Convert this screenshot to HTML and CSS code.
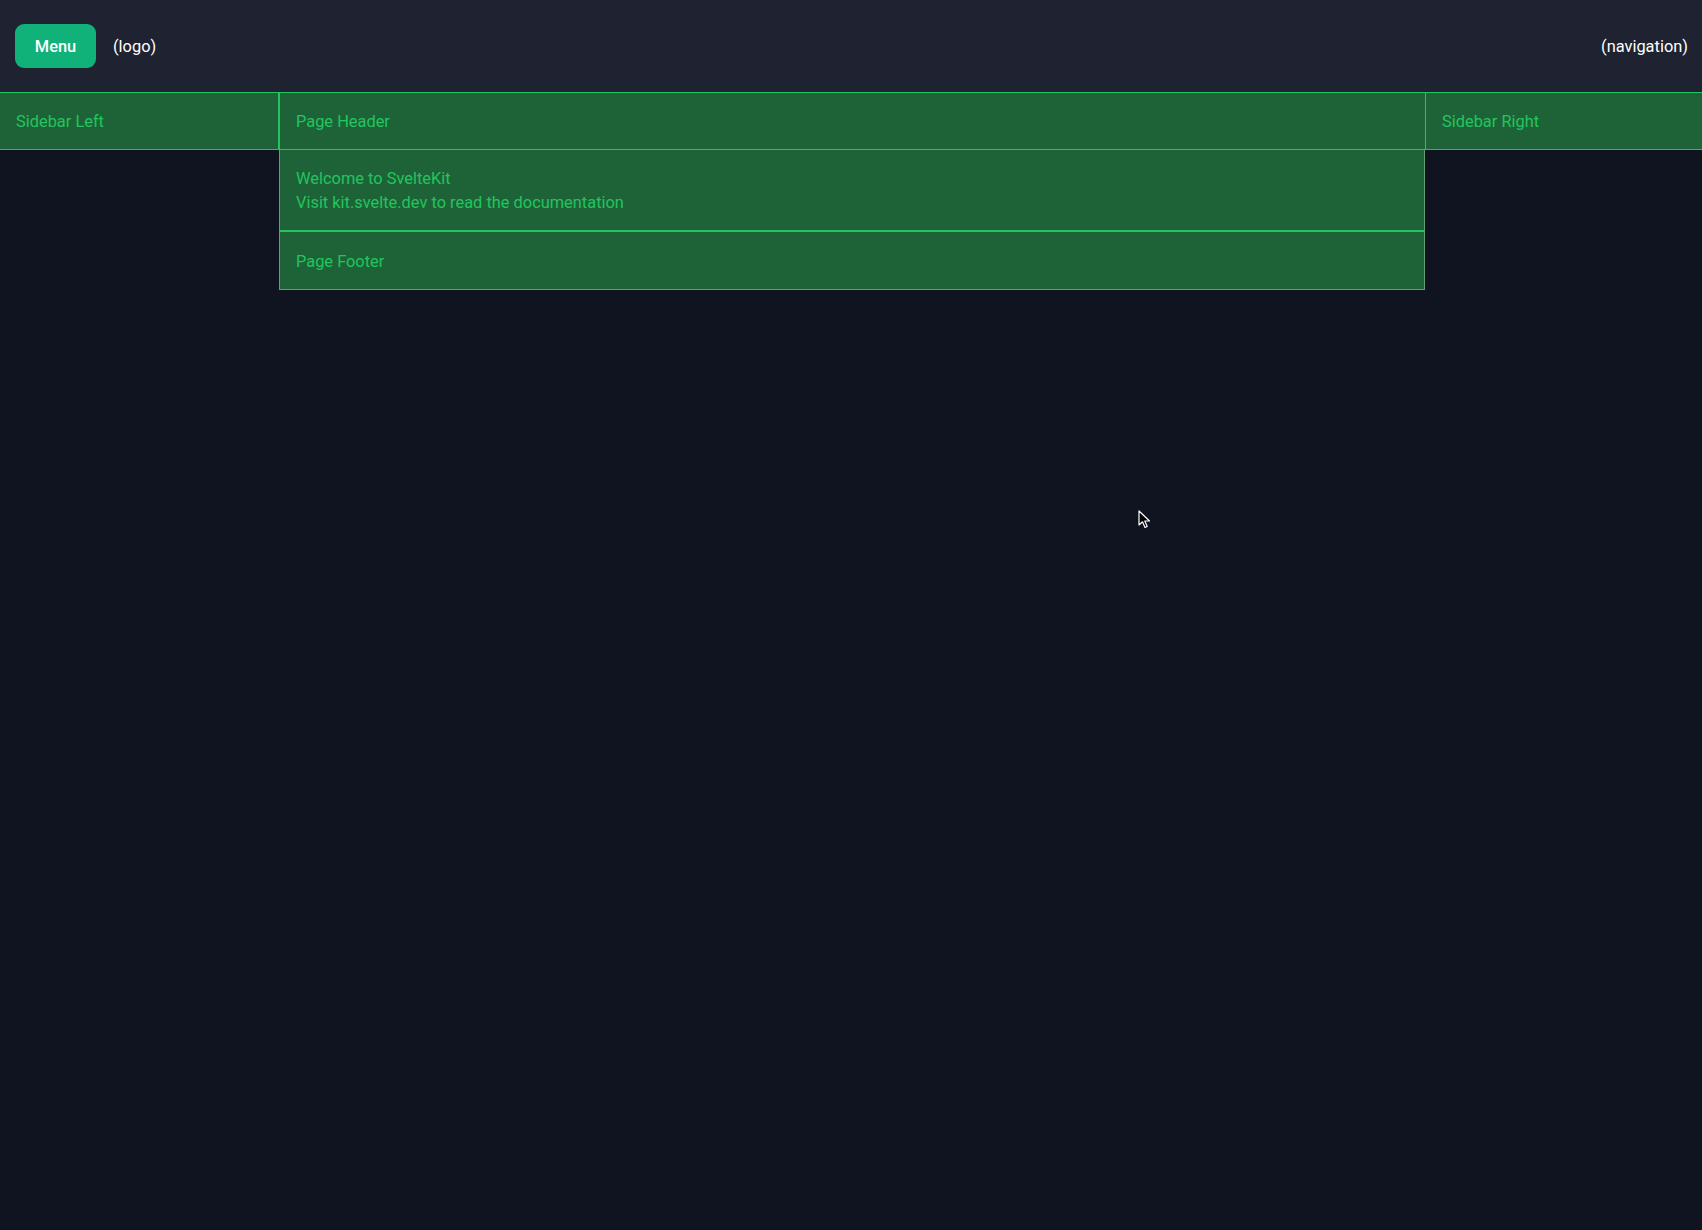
FILE: index.html
```html
<!DOCTYPE html>
<html lang="en">
<head>
<meta charset="utf-8">
<title>SvelteKit</title>
<link rel="stylesheet" href="styles.css">
</head>
<body>
<header class="app-bar">
  <div class="app-bar-lead">
    <button class="btn-menu">Menu</button>
    <span class="logo">(logo)</span>
  </div>
  <nav class="nav">(navigation)</nav>
</header>
<div class="shell">
  <aside class="sidebar sidebar-left">Sidebar Left</aside>
  <div class="page">
    <div class="page-header">Page Header</div>
    <div class="page-content">
      <p>Welcome to SvelteKit</p>
      <p>Visit kit.svelte.dev to read the documentation</p>
    </div>
    <div class="page-footer">Page Footer</div>
  </div>
  <aside class="sidebar sidebar-right">Sidebar Right</aside>
</div>
<svg class="cursor" width="14" height="20" viewBox="0 0 14 20"><path d="M1 1 L1 15 L4.5 11.8 L7 17.5 L9.2 16.5 L6.8 11 L11.5 11 Z" fill="#000" stroke="#fff" stroke-width="1.2" stroke-linejoin="round"/></svg>
</body>
</html>
```
FILE: styles.css
```css
html, body {
  margin: 0;
  padding: 0;
}
body {
  background: #0f1420;
  min-height: 1230px;
  font-family: Roboto, "Noto Sans", "Liberation Sans", sans-serif;
  font-size: 16.4px;
  line-height: 26px;
  color: #22c55e;
  position: relative;
}
.app-bar {
  height: 92px;
  box-sizing: border-box;
  background: #1e2231;
  display: flex;
  align-items: center;
  justify-content: space-between;
  padding: 2px 14px 0 15px;
  color: #fff;
}
.app-bar-lead {
  display: flex;
  align-items: center;
  gap: 17px;
}
.btn-menu {
  width: 81px;
  height: 44px;
  margin-top: -2px;
  border: 0;
  border-radius: 9px;
  background: #10b27a;
  color: #fff;
  font: 500 16.4px/1 Roboto, "Noto Sans", sans-serif;
  padding: 2px 0 0;
}
.logo, .nav {
  font-size: 16.4px;
}
.shell {
  display: grid;
  grid-template-columns: 279px 1fr 277px;
  align-items: start;
}
.sidebar, .page-header, .page-content, .page-footer {
  background: #1e6338;
  padding: 16px 16px;
  box-sizing: border-box;
}
.sidebar {
  height: 58px;
  border-top: 1px solid #22c55e;
  border-bottom: 1px solid #5f9f72;
}
.sidebar-left {
  border-right: 1px solid #22c55e;
}
.sidebar-right {
  border-left: 1px solid #22c55e;
}
.page {
  display: flex;
  flex-direction: column;
}
.page-header {
  height: 58px;
  border-top: 1px solid #22c55e;
  border-left: 1px solid #22c55e;
  border-bottom: 1px solid #22c55e;
}
.page-content {
  height: 82px;
  padding-top: 17px;
  border-left: 1px solid #5f9f72;
  border-right: 1px solid #5f9f72;
  border-bottom: 2px solid #22c55e;
}
.page-content p {
  margin: 0;
  line-height: 24px;
}
.page-footer {
  height: 58px;
  padding-top: 17px;
  border-left: 1px solid #5f9f72;
  border-right: 1px solid #5f9f72;
  border-bottom: 1px solid #5f9f72;
}
.cursor {
  position: absolute;
  left: 1138px;
  top: 510px;
}
```
